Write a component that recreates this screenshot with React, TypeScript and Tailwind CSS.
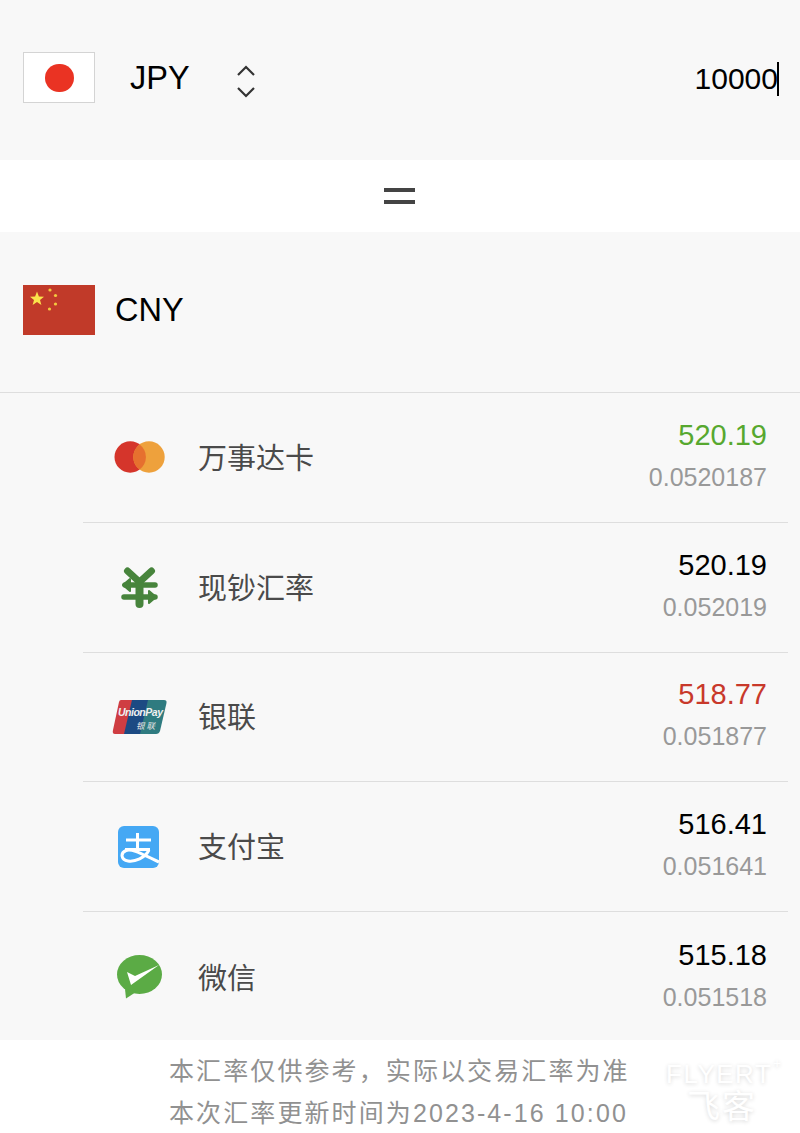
const sans = "font-['Liberation_Sans','Noto_Sans_CJK_SC',sans-serif]";

function JapanFlag() {
  return (
    <div className="w-[72px] h-[51px] bg-white border border-[#d4d4d4] flex items-center justify-center shrink-0">
      <div className="w-[29px] h-[28px] rounded-full bg-[#ea3323]" />
    </div>
  );
}

function ChinaFlag() {
  return (
    <svg width="72" height="50" viewBox="0 0 72 50" className="shrink-0">
      <rect width="72" height="50" fill="#c13a29" />
      <polygon
        points="14,6.5 15.9,11.6 21,11.8 17,15 18.4,20 14,17.1 9.6,20 11,15 7,11.8 12.1,11.6"
        fill="#fbe34b"
      />
      <circle cx="27" cy="5" r="1.6" fill="#f3c93f" />
      <circle cx="32.5" cy="10.5" r="1.6" fill="#f3c93f" />
      <circle cx="32.5" cy="19" r="1.6" fill="#f3c93f" />
      <circle cx="26.5" cy="24" r="1.6" fill="#f3c93f" />
    </svg>
  );
}

function Updown() {
  return (
    <svg width="20" height="36" viewBox="0 0 20 36" fill="none" stroke="#333" strokeWidth="2.2">
      <path d="M2 11 L10 3 L18 11" />
      <path d="M2 24 L10 32 L18 24" />
    </svg>
  );
}

function MastercardIcon() {
  return (
    <svg width="51" height="32" viewBox="0 0 51 32">
      <circle cx="16.2" cy="16" r="15.7" fill="#d5352b" />
      <circle cx="35" cy="16" r="15.7" fill="#eea13c" />
      <path d="M25.6 3.4 A15.7 15.7 0 0 1 25.6 28.6 A15.7 15.7 0 0 1 25.6 3.4 Z" fill="#e6702f" />
    </svg>
  );
}

function CashIcon() {
  return (
    <svg width="37" height="41" viewBox="0 0 37 41" fill="none" stroke="#47843c" strokeLinecap="round" strokeLinejoin="round">
      <path d="M6.500 4 L18.500 15 L30.500 4" strokeWidth="7" />
      <path d="M18.500 15 V37" strokeWidth="8" />
      <path d="M4 18 H34" strokeWidth="5.500" />
      <path d="M3 30 H34" strokeWidth="5.500" />
      <path d="M9 12 L2 18 L9 24 Z" fill="#47843c" strokeWidth="2" />
      <path d="M28 24 L35 30 L28 36 Z" fill="#47843c" strokeWidth="2" />
    </svg>
  );
}

function UnionPayIcon() {
  return (
    <svg width="55" height="36" viewBox="0 0 55 36">
      <path d="M9 1 H24 L16 35 H3 Q0 35 1 31 L7 3 Q7.500 1 9 1 Z" fill="#cf3d42" />
      <path d="M20 1 H40 L32 35 H12 Z" fill="#1c4a83" />
      <path d="M36 1 H52 Q55 1 54.500 4 L48 32 Q47 35 44 35 H28 Z" fill="#2f7b80" />
      <text x="6" y="17" fontSize="10.500" fontWeight="700" fontStyle="italic" fill="#f1f1f1" fontFamily="Liberation Sans, sans-serif" textLength="45">UnionPay</text>
      <text x="24" y="30" fontSize="8.500" fontStyle="italic" fill="#e4e4e4" fontFamily="Noto Sans CJK SC, sans-serif" textLength="19">银联</text>
    </svg>
  );
}

function AlipayIcon() {
  return (
    <svg width="41" height="42" viewBox="0 0 41 42" className="-translate-x-[1px]">
      <rect width="41" height="42" rx="6" fill="#45a8f4" />
      <g fill="none" stroke="#fff" strokeWidth="3">
        <path d="M8 14 H33" />
        <path d="M19.500 7 V24" />
        <path d="M7 23.500 H32" />
        <path d="M31 24 C27 32 17 36 10 35 C3 34 2 27 8 24.500 C15 22 27 30 41 36" />
      </g>
    </svg>
  );
}

function WechatIcon() {
  return (
    <svg width="45" height="44" viewBox="0 0 45 44">
      <ellipse cx="22.500" cy="19.500" rx="22.500" ry="19.500" fill="#5bab45" />
      <path d="M8 34 L9 43.500 L19 37 Z" fill="#5bab45" />
      <path d="M10 17 L18 21 L42 10 L14 30 Z" fill="#fff" />
    </svg>
  );
}

const rows = [
  { name: "万事达卡", icon: <MastercardIcon />, total: "520.19", rate: "0.0520187", color: "text-[#57a82f]" },
  { name: "现钞汇率", icon: <CashIcon />, total: "520.19", rate: "0.052019", color: "text-black" },
  { name: "银联", icon: <UnionPayIcon />, total: "518.77", rate: "0.051877", color: "text-[#c8392b]" },
  { name: "支付宝", icon: <AlipayIcon />, total: "516.41", rate: "0.051641", color: "text-black" },
  { name: "微信", icon: <WechatIcon />, total: "515.18", rate: "0.051518", color: "text-black" },
];

export default function App() {
  return (
    <div className={`relative w-[800px] h-[1133px] overflow-hidden bg-white ${sans}`}>
      {/* source currency */}
      <div className="h-[160px] bg-[#f8f8f8] flex items-center pl-[23px] pr-[21px] pb-[5px]">
        <JapanFlag />
        <span className="ml-[35px] text-[32.500px] text-black leading-none translate-y-[1px]">JPY</span>
        <div className="ml-[46px] flex translate-y-[4px]">
          <Updown />
        </div>
        <div className="ml-auto flex items-center translate-y-[1px]">
          <span className="text-[30px] text-black leading-none">10000</span>
          <span className="w-[2px] h-[34px] bg-black -ml-[1px]" />
        </div>
      </div>

      <div className="h-[72px] bg-white flex flex-col items-center justify-center gap-[8px]">
        <div className="w-[31px] h-[4px] bg-[#444] -translate-x-[1px]" />
        <div className="w-[31px] h-[4px] bg-[#444] -translate-x-[1px]" />
      </div>

      {/* target currency */}
      <div className="h-[161px] bg-[#f8f8f8] border-b border-[#dedede] flex items-center pl-[23px] pb-[4px]">
        <ChinaFlag />
        <span className="ml-[20px] text-[32.500px] text-black leading-none">CNY</span>
      </div>

      <div className="h-[647px] bg-[#f8f8f8] pl-[83px] pr-[12px]">
        {rows.map((row, i) => (
          <div
            key={row.name}
            className={`h-[129.800px] flex items-center ${i < rows.length - 1 ? "border-b border-[#dedede]" : ""}`}
          >
            <div className="w-[115px] flex justify-center shrink-0 -translate-x-[1px]">{row.icon}</div>
            <span className="text-[29px] text-[#4a4a4a] leading-none translate-y-[2px]">{row.name}</span>
            <div className="ml-auto mr-[21px] text-right -translate-y-[2px]">
              <div className={`text-[29px] leading-none ${row.color}`}>{row.total}</div>
              <div className="mt-[15px] text-[25px] leading-none text-[#999]">{row.rate}</div>
            </div>
          </div>
        ))}
      </div>

      <div className="h-[93px] bg-white pl-[169px] pt-[10px] text-[25px] leading-[42px] tracking-[2.100px] text-[#919191]">
        <div>本汇率仅供参考，实际以交易汇率为准</div>
        <div>本次汇率更新时间为2023-4-16 10:00</div>
      </div>

      {/* watermark */}
      <div className="absolute left-[666px] top-[1059px] w-[124px] text-white [text-shadow:0_1px_4px_rgba(0,0,0,0.16)]">
        <div className="text-[26px] leading-[30px] tracking-[1.500px]">FLYERT</div>
        <div className="pl-[21px] text-[33px] leading-[36px] tracking-[2px]">飞客</div>
        <span className="absolute left-[107px] -top-[3px] text-[14px] leading-none">+</span>
      </div>
    </div>
  );
}
